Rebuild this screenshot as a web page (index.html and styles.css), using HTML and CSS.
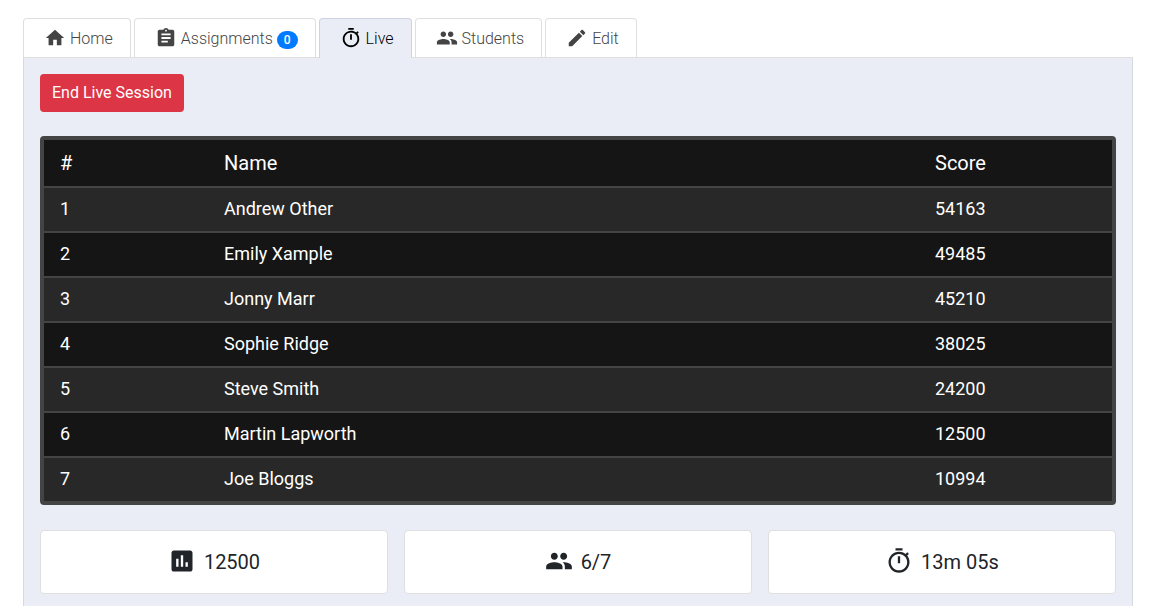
FILE: index.html
```html
<!DOCTYPE html>
<html lang="en">

<head>
  <meta charset="UTF-8">
  <meta name="viewport" content="width=device-width, initial-scale=1.0">
  <title>Live Session</title>
  <link rel="stylesheet" href="styles.css">
</head>

<body>
  <!-- shared icons -->
  <svg class="sprite" aria-hidden="true">
    <symbol id="timer" viewBox="0 0 24 24">
      <path d="M15 1H9v2h6V1zm-4 13h2V8h-2v6zm8.03-6.61l1.42-1.42c-.43-.51-.9-.99-1.41-1.41l-1.42 1.42C16.07 4.74 14.12 4 12 4c-4.97 0-9 4.03-9 9s4.02 9 9 9 9-4.03 9-9c0-2.12-.74-4.07-1.97-5.61zM12 20c-3.87 0-7-3.13-7-7s3.13-7 7-7 7 3.13 7 7-3.13 7-7 7z"/>
    </symbol>
    <symbol id="people" viewBox="0 0 24 24">
      <path d="M16 11c1.66 0 2.99-1.34 2.99-3S17.66 5 16 5c-1.66 0-3 1.34-3 3s1.34 3 3 3zm-8 0c1.66 0 2.99-1.34 2.99-3S9.66 5 8 5C6.34 5 5 6.34 5 8s1.34 3 3 3zm0 2c-2.33 0-7 1.17-7 3.5V19h14v-2.5c0-2.33-4.67-3.5-7-3.5zm8 0c-.29 0-.62.02-.97.05 1.16.84 1.97 1.97 1.97 3.45V19h6v-2.5c0-2.33-4.67-3.5-7-3.5z"/>
    </symbol>
  </svg>

  <div class="main">
    <nav class="tabs">
      <a class="tab" href="#home">
        <svg class="icon" viewBox="0 0 24 24"><path d="M10 20v-6h4v6h5v-8h3L12 3 2 12h3v8z"/></svg>
        Home
      </a>
      <a class="tab" href="#assignments">
        <svg class="icon" viewBox="0 0 24 24"><path d="M19 3h-4.18C14.4 1.84 13.3 1 12 1c-1.3 0-2.4.84-2.82 2H5c-1.1 0-2 .9-2 2v14c0 1.1.9 2 2 2h14c1.1 0 2-.9 2-2V5c0-1.1-.9-2-2-2zm-7 0c.55 0 1 .45 1 1s-.45 1-1 1-1-.45-1-1 .45-1 1-1zm2 14H7v-2h7v2zm3-4H7v-2h10v2zm0-4H7V7h10v2z"/></svg>
        Assignments
        <span class="badge">0</span>
      </a>
      <a class="tab active" href="#live" aria-current="page">
        <svg class="icon"><use href="#timer"/></svg>
        Live
      </a>
      <a class="tab" href="#students">
        <svg class="icon"><use href="#people"/></svg>
        Students
      </a>
      <a class="tab" href="#edit">
        <svg class="icon" viewBox="0 0 24 24"><path d="M3 17.25V21h3.75L17.81 9.94l-3.75-3.75L3 17.25zM20.71 7.04c.39-.39.39-1.02 0-1.41l-2.34-2.34c-.39-.39-1.02-.39-1.41 0l-1.83 1.83 3.75 3.75 1.83-1.83z"/></svg>
        Edit
      </a>
    </nav>

    <div class="panel">
      <button class="btn-end" type="button">End Live Session</button>

      <table class="scores">
        <thead>
          <tr><th class="rank">#</th><th>Name</th><th class="score">Score</th></tr>
        </thead>
        <tbody>
          <tr><td>1</td><td>Andrew Other</td><td>54163</td></tr>
          <tr><td>2</td><td>Emily Xample</td><td>49485</td></tr>
          <tr><td>3</td><td>Jonny Marr</td><td>45210</td></tr>
          <tr><td>4</td><td>Sophie Ridge</td><td>38025</td></tr>
          <tr><td>5</td><td>Steve Smith</td><td>24200</td></tr>
          <tr><td>6</td><td>Martin Lapworth</td><td>12500</td></tr>
          <tr><td>7</td><td>Joe Bloggs</td><td>10994</td></tr>
        </tbody>
      </table>

      <div class="cards">
        <div class="card">
          <svg class="icon" viewBox="0 0 24 24"><path d="M19 3H5c-1.1 0-2 .9-2 2v14c0 1.1.9 2 2 2h14c1.1 0 2-.9 2-2V5c0-1.1-.9-2-2-2zM9 17H7v-7h2v7zm4 0h-2V7h2v10zm4 0h-2v-4h2v4z"/></svg>
          12500
        </div>
        <div class="card">
          <svg class="icon"><use href="#people"/></svg>
          6/7
        </div>
        <div class="card">
          <svg class="icon"><use href="#timer"/></svg>
          13m 05s
        </div>
      </div>
    </div>
  </div>
</body>

</html>
```
FILE: styles.css
```css
* {
  margin: 0;
  padding: 0;
  box-sizing: border-box;
}

body {
  font-family: Roboto, "Liberation Sans", sans-serif;
  font-size: 16px;
  line-height: 24px;
  color: #212529;
  background-color: #fff;
}

.sprite {
  display: none;
}

.icon {
  width: 22px;
  height: 22px;
  margin-bottom: 2px;
  fill: currentColor;
  flex: none;
}

.main {
  min-height: 100vh;
  padding: 18px 17px 0 23px;
  display: flex;
  flex-direction: column;
}

.tabs {
  display: flex;
  gap: 3px;
}

.tab {
  display: flex;
  align-items: center;
  gap: 4px;
  height: 39px;
  padding: 2px 17px 0 20px;
  border: 1px solid #dfdfdf;
  border-bottom: 0;
  border-radius: 4px 4px 0 0;
  color: #444;
  font-weight: 300;
  text-decoration: none;

  &.active {
    /* covers the top border of the panel */
    height: 40px;
    margin-bottom: -1px;
    padding-bottom: 1px;
    position: relative;
    border-color: #ced3e2;
    background-color: #eaedf5;
    color: #000;
  }
}

.badge {
  margin-top: 2px;
  padding: 3px 7px;
  border-radius: 10px;
  background-color: #007bff;
  color: #fff;
  font-size: 12px;
  font-weight: 500;
  line-height: 12px;
}

.panel {
  flex: 1;
  padding: 16px 16px 12px;
  border: 1px solid #d5d9e3;
  border-top-color: #dfdfdf;
  border-bottom: 0;
  background-color: #eaedf5;
}

.btn-end {
  display: block;
  height: 38px;
  padding: 0 12px;
  border: 0;
  border-radius: 4px;
  background-color: #dc3545;
  color: #fff;
  font: inherit;
  cursor: pointer;
}

.scores {
  width: 100%;
  margin-top: 24px;
  border: 4px solid #444;
  border-radius: 4px;
  border-spacing: 0;
  table-layout: fixed;
  background-color: #444;
  color: #fff;

  & th,
  & td {
    height: 45px;
    padding: 0 16px;
    border-top: 2px solid #444;
    text-align: left;
  }

  & th {
    height: 46px;
    border-top: 0;
    font-size: 20px;
    font-weight: 400;
    background-color: #151515;
  }

  & td {
    padding-bottom: 2px;
    font-size: 18px;
  }

  & tr:nth-child(odd) td {
    background-color: #282828;
  }

  & tr:nth-child(even) td {
    background-color: #151515;
  }

  & .rank {
    width: 164px;
  }

  & .score {
    width: 193px;
  }
}

.cards {
  display: grid;
  grid-template-columns: repeat(3, 1fr);
  gap: 16px;
  margin-top: 25px;
}

.card {
  display: flex;
  align-items: center;
  justify-content: center;
  gap: 8px;
  height: 64px;
  border: 1px solid #dfdfdf;
  border-radius: 4px;
  background-color: #fff;
  font-size: 20px;

  & .icon {
    width: 28px;
    height: 28px;
  }
}
```
